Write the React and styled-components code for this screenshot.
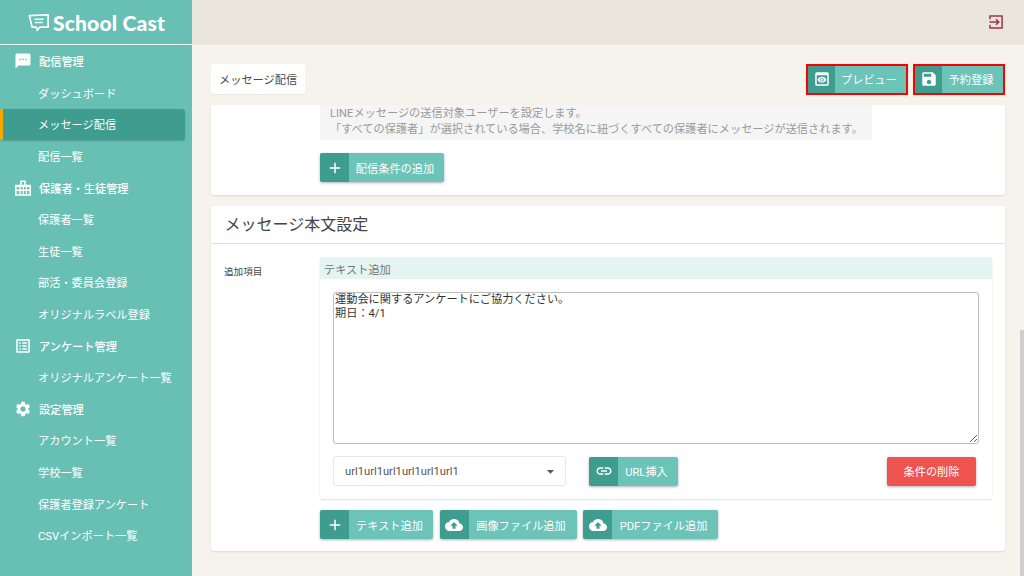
import React from "react"
import styled, { createGlobalStyle } from "styled-components"
import {
  MdTextsms,
  MdListAlt,
  MdSettings,
  MdSave,
  MdAdd,
  MdLink,
  MdCloudUpload,
  MdArrowDropDown,
  MdPreview,
} from "react-icons/md"

const GlobalStyle = createGlobalStyle`
  html, body {
    margin: 0;
    padding: 0;
    height: 100%;
    overflow: hidden;
  }
  body {
    font-family: Roboto, "Noto Sans CJK JP", sans-serif;
    color: #4a4a4a;
    background: #f6f3ec;
  }
  * {
    box-sizing: border-box;
  }
`

const Page = styled.div`
  width: 1024px;
  height: 576px;
  display: flex;
  position: relative;
  overflow: hidden;
`

const Sidebar = styled.aside`
  width: 192px;
  flex-shrink: 0;
  background: #68c0b5;
  color: #fff;
  display: flex;
  flex-direction: column;
`

const Logo = styled.div`
  height: 45.4px;
  flex-shrink: 0;
  border-bottom: 1px solid #eef8f6;
  display: flex;
  align-items: center;
  justify-content: center;
  gap: 3px;
  padding-left: 1px;
  font-family: Lato, sans-serif;
  font-weight: 900;
  font-size: 21px;
  letter-spacing: 0.2px;
`

const Menu = styled.nav`
  display: flex;
  flex-direction: column;
`

const MenuHead = styled.div`
  height: 31.6px;
  display: flex;
  align-items: center;
  padding-left: 14px;
  gap: 7px;
  font-size: 11.2px;
  font-weight: 500;

  svg {
    width: 18px;
    height: 18px;
    flex-shrink: 0;
  }
`

const MenuItem = styled.div`
  height: 31.6px;
  display: flex;
  align-items: center;
  font-size: 11.2px;
  border-radius: 0 3px 3px 0;
  width: ${(p) => (p.$active ? "185px" : "auto")};
  background: ${(p) => (p.$active ? "#3f9d90" : "transparent")};
  border-left: ${(p) => (p.$active ? "3px solid #f7a600" : "none")};
  padding-left: ${(p) => (p.$active ? "35px" : "38px")};
  box-shadow: ${(p) => (p.$active ? "0 1px 2px rgba(0,0,0,0.2)" : "none")};
`

const Main = styled.main`
  flex: 1;
  display: flex;
  flex-direction: column;
  min-width: 0;
`

const Header = styled.header`
  height: 45px;
  flex-shrink: 0;
  background: #ebe6dc;
  display: flex;
  align-items: center;
  justify-content: flex-end;
  padding: 0 21px 1px 0;
`

const Toolbar = styled.div`
  height: 60px;
  flex-shrink: 0;
  display: flex;
  align-items: center;
  justify-content: space-between;
  padding: 8px 19px 0 19px;
`

const Title = styled.div`
  height: 30px;
  width: 94px;
  padding-left: 8px;
  background: #fff;
  border-radius: 2px;
  display: flex;
  align-items: center;
  font-size: 11.2px;
  box-shadow: 0 1px 1px rgba(0, 0, 0, 0.05);
`

const ToolbarActions = styled.div`
  display: flex;
  gap: 5px;
`

const Highlight = styled.div`
  border: 2px solid #f00;
  display: flex;
`

const Content = styled.div`
  flex: 1;
  padding: 0 19px;
  display: flex;
  flex-direction: column;
  gap: 11px;
  min-height: 0;
`

const Card = styled.section`
  background: #fff;
  border-radius: 0 0 3px 3px;
  box-shadow: 0 1px 2px rgba(60, 50, 30, 0.14);
`

const TopCard = styled(Card)`
  height: 90px;
  padding-left: 109px;
`

const Notice = styled.div`
  width: 552px;
  height: 35px;
  background: #f5f5f5;
  padding: 1px 0 0 10px;
  color: #9a9a9a;
  font-size: 11.2px;
  line-height: 15.5px;
  white-space: nowrap;
  margin-bottom: 13px;
  border-radius: 0 0 2px 2px;
`

const SectionTitle = styled.h2`
  margin: 0;
  height: 38px;
  padding: 0 0 3px 13.5px;
  display: flex;
  align-items: center;
  font-size: 16px;
  font-weight: 400;
  color: #444;
  border-bottom: 1px solid #dedede;
`

const SectionBody = styled.div`
  display: grid;
  grid-template-columns: 96px 672px;
  padding: 13px 13px 12px 13px;
`

const FieldLabel = styled.div`
  font-size: 9.6px;
  padding-top: 7px;
  color: #444;
`

const Panel = styled.div`
  border-radius: 3px;
  box-shadow: 0 1px 2px rgba(0, 0, 0, 0.12);
`

const PanelHead = styled.div`
  height: 22px;
  background: #e3f4f1;
  border-radius: 3px 3px 0 0;
  font-size: 11.2px;
  color: #777;
  padding: 1px 0 0 4px;
  display: flex;
  align-items: center;
`

const PanelBody = styled.div`
  padding: 13px;
`

const TextBox = styled.textarea`
  display: block;
  width: 646px;
  height: 152px;
  padding: 0 1px;
  border: 1px solid #bdbdbd;
  border-radius: 3px;
  font-family: Roboto, "Noto Sans CJK JP", sans-serif;
  font-size: 11.2px;
  line-height: 14px;
  color: #333;
  outline: none;
`

const PanelRow = styled.div`
  margin-top: 12px;
  display: flex;
  align-items: center;
`

const SelectBox = styled.div`
  width: 233px;
  height: 30px;
  border: 1px solid #e8e8e8;
  border-radius: 3px;
  padding: 0 6px 0 11px;
  display: flex;
  align-items: center;
  justify-content: space-between;
  font-size: 11.2px;
  color: #555;
  margin-right: 23px;

  svg {
    width: 17px;
    height: 17px;
    color: #555;
  }
`

const Button = styled.button`
  height: ${(p) => (p.$square ? "27px" : "29px")};
  padding: 0;
  border: 0;
  border-radius: ${(p) => (p.$square ? "0" : "2px")};
  background: #6cc3b8;
  color: #fff;
  display: flex;
  align-items: stretch;
  font-family: inherit;
  font-size: 11.2px;
  overflow: hidden;
  box-shadow: ${(p) => (p.$square ? "none" : "0 1px 3px rgba(0, 0, 0, 0.3)")};
`

const ButtonIcon = styled.span`
  width: ${(p) => (p.$square ? "27px" : "29px")};
  background: #3f9d90;
  display: flex;
  align-items: center;
  justify-content: center;

  svg {
    width: 18px;
    height: 18px;
  }
`

const ButtonText = styled.span`
  display: flex;
  align-items: center;
  justify-content: center;
  padding-right: 3px;
  width: ${(p) => p.$w}px;
`

const DeleteButton = styled.button`
  width: 89px;
  height: 29px;
  margin-left: auto;
  margin-right: 3px;
  border: 0;
  border-radius: 2px;
  background: #ef5350;
  color: #fff;
  font-family: inherit;
  font-size: 11.2px;
  box-shadow: 0 1px 3px rgba(0, 0, 0, 0.3);
`

const AddRow = styled.div`
  grid-column: 2;
  margin-top: 11px;
  display: flex;
  gap: 6.5px;
`

const Scrollbar = styled.div`
  position: absolute;
  right: 0;
  top: 330px;
  width: 4px;
  height: 246px;
  background: #cfcfcf;
`

const BubbleLogo = () => (
  <svg width="22" height="19" viewBox="0 0 24 20" fill="none" stroke="#fff" strokeWidth="1.8">
    <path d="M1.5 2.5 L22 1.5 V15 H13 L10 18.5 L9 15 H4.5 Z" strokeLinejoin="round" />
    <path d="M7 6.5 H17 M7.5 10 H16" strokeWidth="1.5" />
  </svg>
)

const SchoolIcon = () => (
  <svg viewBox="0 0 18 18" fill="#fff">
    <path d="M6.2 1.5h5.6v4.3H17v11H1v-11h5.2zM7.8 3v2.8h2.4V3zM2.6 8v2.4h2.6V8zm4 0v2.4h2V8zm3.2 0v2.4h2V8zm3.2 0v2.4h2.4V8zm-10.4 4v3.2h2.6V12zm4 0v3.2h2V12zm3.2 0v3.2h2V12zm3.2 0v3.2h2.4V12z" fillRule="evenodd" />
  </svg>
)

const ExitIcon = () => (
  <svg width="14" height="14" viewBox="0 0 15 15" fill="none" stroke="#a0334a" strokeWidth="1.6">
    <path d="M1 4.5V1h13v13H1v-3.5" />
    <path d="M0.5 7.5H10M7.5 4.5l3 3-3 3" />
  </svg>
)

const menu = [
  {
    icon: <MdTextsms />,
    label: "配信管理",
    items: ["ダッシュボード", "メッセージ配信", "配信一覧"],
  },
  {
    icon: <SchoolIcon />,
    label: "保護者・生徒管理",
    items: ["保護者一覧", "生徒一覧", "部活・委員会登録", "オリジナルラベル登録"],
  },
  {
    icon: <MdListAlt />,
    label: "アンケート管理",
    items: ["オリジナルアンケート一覧"],
  },
  {
    icon: <MdSettings />,
    label: "設定管理",
    items: ["アカウント一覧", "学校一覧", "保護者登録アンケート", "CSVインポート一覧"],
  },
]

const IconButton = ({ icon, label, width, square }) => (
  <Button $square={square}>
    <ButtonIcon $square={square}>{icon}</ButtonIcon>
    <ButtonText $w={width}>{label}</ButtonText>
  </Button>
)

export default function App() {
  return (
    <Page>
      <GlobalStyle />
      <Sidebar>
        <Logo>
          <BubbleLogo />
          School Cast
        </Logo>
        <Menu>
          {menu.map((group) => (
            <React.Fragment key={group.label}>
              <MenuHead>
                {group.icon}
                {group.label}
              </MenuHead>
              {group.items.map((item) => (
                <MenuItem key={item} $active={item === "メッセージ配信"}>
                  {item}
                </MenuItem>
              ))}
            </React.Fragment>
          ))}
        </Menu>
      </Sidebar>
      <Main>
        <Header>
          <ExitIcon />
        </Header>
        <Toolbar>
          <Title>メッセージ配信</Title>
          <ToolbarActions>
            <Highlight>
              <IconButton square icon={<MdPreview />} label="プレビュー" width={71} />
            </Highlight>
            <Highlight>
              <IconButton square icon={<MdSave />} label="予約登録" width={61} />
            </Highlight>
          </ToolbarActions>
        </Toolbar>
        <Content>
          <TopCard>
            <Notice>
              LINEメッセージの送信対象ユーザーを設定します。
              <br />
              「すべての保護者」が選択されている場合、学校名に紐づくすべての保護者にメッセージが送信されます。
            </Notice>
            <IconButton icon={<MdAdd />} label="配信条件の追加" width={95} />
          </TopCard>
          <Card>
            <SectionTitle>メッセージ本文設定</SectionTitle>
            <SectionBody>
              <FieldLabel>追加項目</FieldLabel>
              <Panel>
                <PanelHead>テキスト追加</PanelHead>
                <PanelBody>
                  <TextBox
                    readOnly
                    defaultValue={"運動会に関するアンケートにご協力ください。\n期日：4/1"}
                  />
                  <PanelRow>
                    <SelectBox>
                      url1url1url1url1url1url1
                      <MdArrowDropDown />
                    </SelectBox>
                    <IconButton icon={<MdLink />} label="URL挿入" width={60} />
                    <DeleteButton>条件の削除</DeleteButton>
                  </PanelRow>
                </PanelBody>
              </Panel>
              <AddRow>
                <IconButton icon={<MdAdd />} label="テキスト追加" width={84} />
                <IconButton icon={<MdCloudUpload />} label="画像ファイル追加" width={108} />
                <IconButton icon={<MdCloudUpload />} label="PDFファイル追加" width={106} />
              </AddRow>
            </SectionBody>
          </Card>
        </Content>
      </Main>
      <Scrollbar />
    </Page>
  )
}
